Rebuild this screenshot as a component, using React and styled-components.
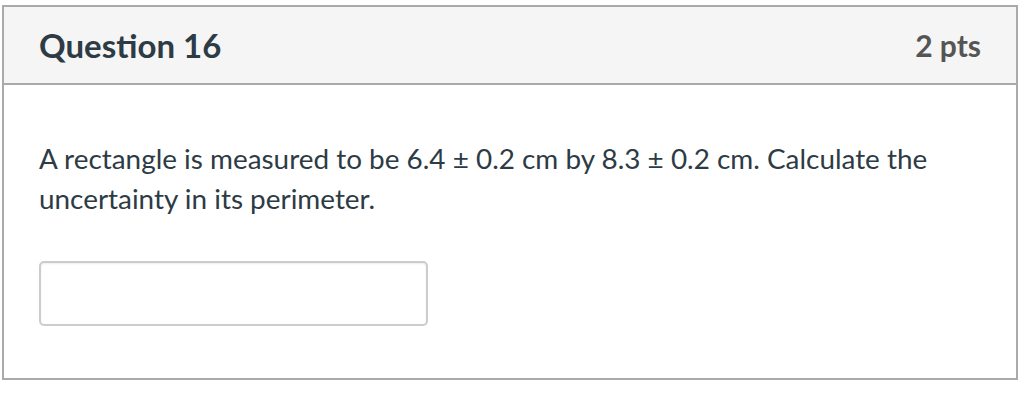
import React from "react";
import styled, { createGlobalStyle } from "styled-components";

const Global = createGlobalStyle`
  html, body { margin: 0; padding: 0; background: #fff; }
  body { font-family: Lato, "Open Sans", sans-serif; }
`;

const Page = styled.div`
  padding: 5px 6px 0 2px;
`;

const Card = styled.div`
  border: 2px solid #aaaaaa;
  width: 1012px;
  box-sizing: content-box;
`;

const Header = styled.div`
  display: flex;
  justify-content: space-between;
  align-items: center;
  height: 76px;
  padding: 0 35px 0 35px;
  background: #f5f5f5;
  border-bottom: 2px solid #aaaaaa;
`;

const Title = styled.h2`
  margin: 0;
  font-size: 33px;
  font-weight: 700;
  color: #2d3b45;
`;

const Points = styled.div`
  font-size: 30px;
  font-weight: 700;
  color: #555555;
`;

const Body = styled.div`
  padding: 53px 35px 52px 35px;
`;

const Text = styled.p`
  margin: 0;
  font-size: 27.9px;
  line-height: 40px;
  color: #2d3b45;
`;

const Answer = styled.input`
  display: block;
  margin-top: 43px;
  width: 389px;
  height: 65px;
  box-sizing: border-box;
  border: 2px solid #cccccc;
  border-radius: 5px;
  box-shadow: inset 0 1px 2px rgba(0, 0, 0, 0.08);
  background: #fff;
  outline: none;
`;

export default function App() {
  return (
    <>
      <Global />
      <Page>
        <Card>
          <Header>
            <Title>Question 16</Title>
            <Points>2 pts</Points>
          </Header>
          <Body>
            <Text>
              A rectangle is measured to be 6.4 ± 0.2 cm by 8.3 ± 0.2 cm. Calculate the
              <br />
              uncertainty in its perimeter.
            </Text>
            <Answer type="text" aria-label="Answer" />
          </Body>
        </Card>
      </Page>
    </>
  );
}
